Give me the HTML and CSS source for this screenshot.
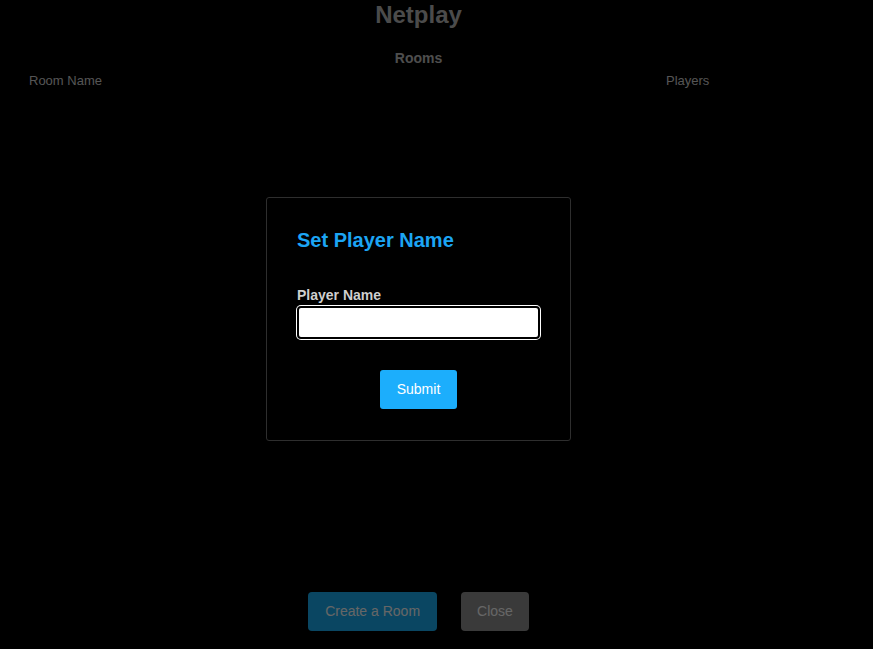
FILE: index.html
```html
<!DOCTYPE html>
<html lang="en">
<head>
<meta charset="utf-8">
<title>Netplay</title>
<link rel="stylesheet" href="styles.css">
</head>
<body>
<div class="app">
  <h1 class="title">Netplay</h1>
  <h2 class="section">Rooms</h2>
  <div class="rooms-head">
    <span>Room Name</span>
    <span>Players</span>
  </div>
  <div class="rooms-body"></div>
  <div class="actions">
    <button class="btn btn-primary" type="button">Create a Room</button>
    <button class="btn btn-grey" type="button">Close</button>
  </div>

  <div class="overlay">
    <div class="modal">
      <h3 class="modal-title">Set Player Name</h3>
      <label class="field-label" for="pname">Player Name</label>
      <input class="field-input" id="pname" type="text">
      <div class="modal-actions">
        <button class="btn btn-submit" type="button">Submit</button>
      </div>
    </div>
  </div>
</div>
</body>
</html>
```
FILE: styles.css
```css
* { box-sizing: border-box; }

html, body {
  margin: 0;
  background: #000;
  font-family: "Liberation Sans", Arial, sans-serif;
}

.app {
  position: relative;
  width: 837px;
  height: 637px;
  display: flex;
  flex-direction: column;
}

.title {
  margin: 0;
  padding-top: 1px;
  font-size: 24px;
  line-height: 28px;
  font-weight: bold;
  text-align: center;
  color: #bcbcbc;
}

.section {
  margin: 21px 0 0;
  font-size: 14px;
  line-height: 17px;
  font-weight: bold;
  text-align: center;
  color: #c2c2c2;
}

.rooms-head {
  margin-top: 6px;
  display: grid;
  grid-template-columns: 637px 1fr;
  padding-left: 29px;
  font-size: 13px;
  line-height: 15px;
  color: #d4d4d4;
}

.rooms-body { flex: 1; }

.actions {
  display: flex;
  justify-content: center;
  gap: 24px;
  padding-bottom: 6px;
}

.btn {
  border: none;
  border-radius: 4px;
  font-family: "Liberation Sans", Arial, sans-serif;
  font-size: 14px;
  line-height: 17px;
  height: 39px;
  padding: 0 16px;
  color: #fff;
  cursor: pointer;
}

.btn-primary { background: #19b0f5; padding: 0 17px; }
.btn-grey { background: #929292; }

.overlay {
  position: absolute;
  inset: 0;
  background: rgba(0, 0, 0, 0.6);
  display: flex;
  align-items: center;
  justify-content: center;
}

.modal {
  width: 305px;
  height: 244px;
  background: #000;
  border: 1px solid #2e2e2e;
  border-radius: 3px;
  padding: 30px 30px 30px;
  display: flex;
  flex-direction: column;
}

.modal-title {
  margin: 0;
  font-size: 20px;
  line-height: 24px;
  font-weight: bold;
  color: #1ca5f4;
}

.field-label {
  margin-top: 35px;
  font-size: 14px;
  line-height: 16px;
  font-weight: bold;
  color: #cfcfcf;
}

.field-input {
  margin-top: 3px;
  width: 100%;
  height: 33px;
  background: #fff;
  border: 2px solid #000;
  border-radius: 4px;
  box-shadow: 0 0 0 1px #fff;
  outline: none;
  font-family: "Liberation Sans", Arial, sans-serif;
  font-size: 14px;
  padding: 0 6px;
}

.modal-actions {
  margin-top: 31px;
  display: flex;
  justify-content: center;
}

.btn-submit {
  background: #1caefc;
  border-radius: 3px;
  padding: 0 16.5px;
}
```
